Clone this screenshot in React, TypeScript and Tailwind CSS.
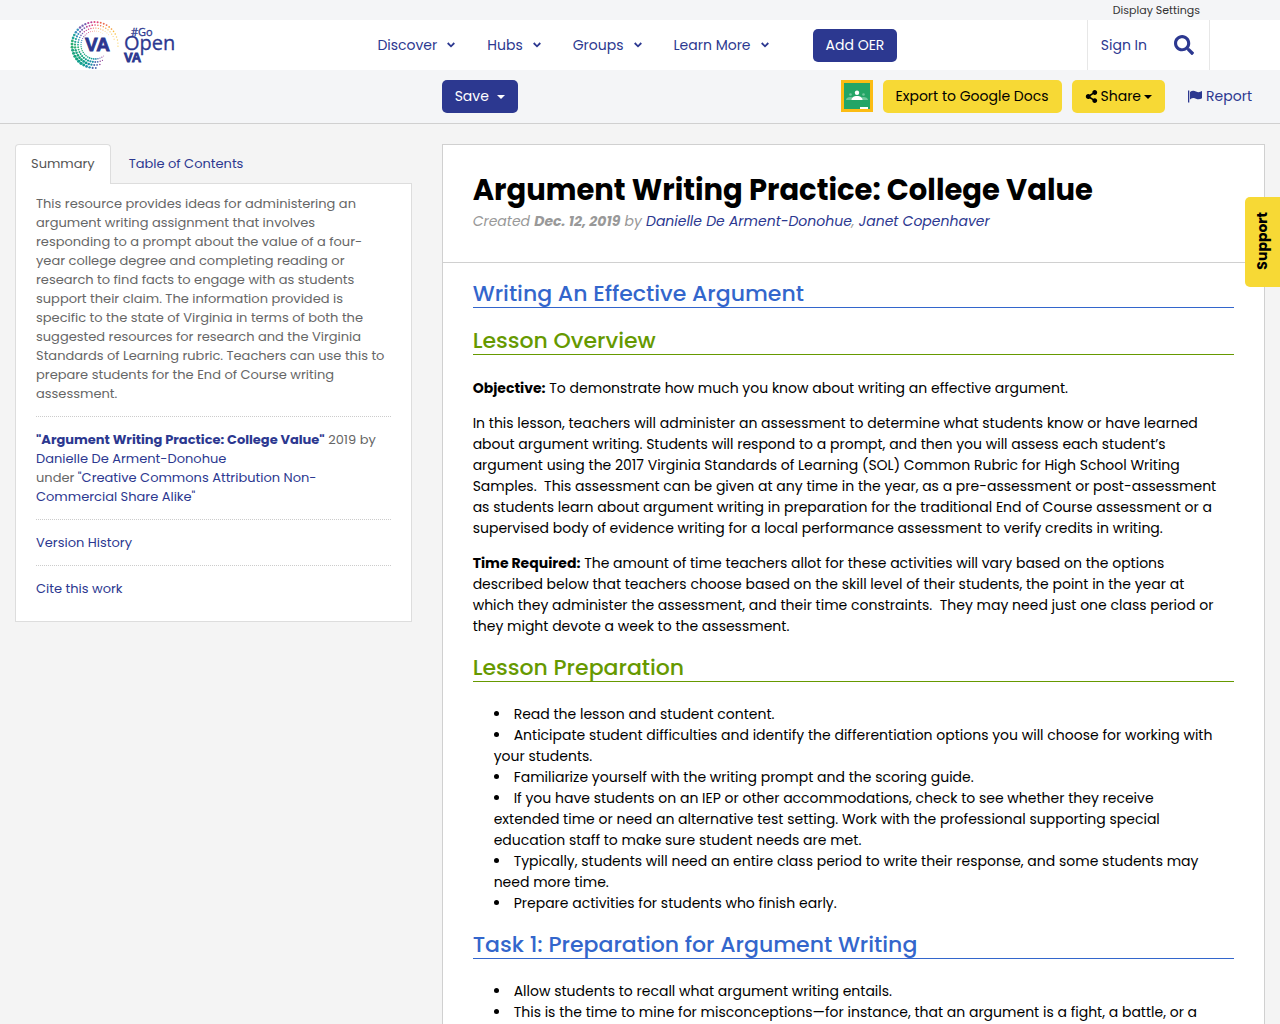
import { useState } from "react";
import { FaSearch, FaShareAlt } from "react-icons/fa";

const navItems = ["Discover", "Hubs", "Groups", "Learn More"];

const preparation = [
  "Read the lesson and student content.",
  "Anticipate student difficulties and identify the differentiation options you will choose for working with your students.",
  "Familiarize yourself with the writing prompt and the scoring guide.",
  "If you have students on an IEP or other accommodations, check to see whether they receive extended time or need an alternative test setting. Work with the professional supporting special education staff to make sure student needs are met.",
  "Typically, students will need an entire class period to write their response, and some students may need more time.",
  "Prepare activities for students who finish early.",
];

const taskOne = [
  "Allow students to recall what argument writing entails.",
  "This is the time to mine for misconceptions—for instance, that an argument is a fight, a battle, or a",
];

// clockwise from the lower right tail, round the left side, to the thin right end
const dotColors = [
  "#8a3f96", "#4a68ac", "#1f8fa8", "#12a08f", "#13a37c", "#22a583",
  "#2fae74", "#22a59a", "#3a90c0", "#7560b0", "#b8449a", "#e0457a",
  "#ec6a4e", "#f39a35", "#f8bd3a", "#f9d36a",
];

function Logo() {
  const dots = [];
  for (let ring = 0; ring < 4; ring++) {
    const count = 36 - ring * 2;
    for (let i = 0; i < count; i++) {
      const t = i / (count - 1);
      const start = 88 - ring * 12;
      const angle = ((start + t * (275 - ring * 8)) * Math.PI) / 180;
      const radius = 23 - ring * 3;
      const grow = t < 0.15 ? 0.9 + t * 5 : 1.65 - (t - 0.15) * 1.2;
      dots.push(
        <circle
          key={`${ring}-${i}`}
          cx={25 + radius * Math.cos(angle)}
          cy={25 + radius * Math.sin(angle)}
          r={Math.max(0.35, grow * (1 - ring * 0.15))}
          fill={dotColors[Math.min(15, Math.floor((t + (3 - ring) * 0.03) * 15))]}
        />
      );
    }
  }
  return (
    <svg
      width="106"
      height="50"
      viewBox="0 0 106 50"
      role="img"
      aria-label="#GoOpenVA"
      fill="#2c3890"
    >
      {dots}
      <g fontFamily="'Liberation Sans', sans-serif" fontWeight="700" stroke="#2c3890" strokeWidth="0.8">
        <text x="15" y="31" fontSize="19">VA</text>
        <text x="54" y="42" fontSize="13">VA</text>
      </g>
      <g fontFamily="'Open Sans', sans-serif" stroke="#2c3890" strokeWidth="0.3">
        <text x="61" y="16" fontSize="11">#Go</text>
        <text x="54" y="30" fontSize="20">Open</text>
      </g>
    </svg>
  );
}

function Chevron() {
  return (
    <svg width="8" height="6" viewBox="0 0 8 6" fill="none" stroke="currentColor" strokeWidth="1.8" aria-hidden="true">
      <path d="M0.7 1 L4 4.3 L7.3 1" />
    </svg>
  );
}

function Caret() {
  return (
    <svg width="8" height="4" viewBox="0 0 8 4" fill="currentColor" aria-hidden="true">
      <path d="M0 0h8L4 4z" />
    </svg>
  );
}

function FlagIcon() {
  return (
    <svg width="14" height="13" viewBox="0 0 14 13" fill="currentColor" aria-hidden="true">
      <path d="M0 0.500h1.300v12H0z" />
      <path d="M2 2c2-1.500 4-1.500 6-0.500s4 0.800 6-0.500v7.200c-2 1.300-4 1.500-6 0.500s-4-0.800-6 0.700z" />
    </svg>
  );
}

function ClassroomIcon() {
  return (
    <svg width="32" height="32" viewBox="0 0 32 32" aria-hidden="true">
      <path fill="#fbbc14" d="M0 0h32v32H0z" />
      <path fill="#23a566" d="M3 3h26v26H3z" />
      <g fill="#6fc69c">
        <circle cx="9.500" cy="14.500" r="1.300" />
        <circle cx="22.500" cy="14.500" r="1.300" />
        <path d="M5 20c0-2 2-3 4.500-3s4 1 4 3zM18.500 20c0-2 2-3 4-3s4.500 1 4.500 3z" />
      </g>
      <circle cx="16" cy="12.800" r="2.200" fill="#fff" />
      <path fill="#fff" d="M10.500 20c0-2.500 2.500-4 5.500-4s5.500 1.500 5.500 4z" />
      <path fill="#fff" d="M19 27h8v2h-8z" />
    </svg>
  );
}

function Heading({ color, children }: { color: string; children: string }) {
  return (
    <h2 className={`mt-5 mb-[22px] border-b pb-[2px] text-[22px] leading-[22px] font-medium ${color}`}>
      {children}
    </h2>
  );
}

function BulletList({ items }: { items: string[] }) {
  return (
    <ul className="mt-[22px] list-inside list-disc pr-[14px] pl-[21px]">
      {items.map((item) => (
        <li key={item}>{item}</li>
      ))}
    </ul>
  );
}

export default function App() {
  const [tab, setTab] = useState<"summary" | "contents">("summary");

  const tabClass = (active: boolean) =>
    active
      ? "-mb-px h-10 rounded-t border border-b-0 border-[#ddd] bg-white px-[15px] pb-[3px] text-[#555]"
      : "h-[39px] px-[15px] text-[#2c3890]";

  return (
    <div className="min-h-screen bg-[#f4f4f4] font-[Poppins,Inter,sans-serif] text-sm leading-[21px] text-black">
      <div className="bg-[#f4f5f7]">
        <div className="mx-auto flex h-5 max-w-[1140px] items-center justify-end px-[10px]">
          <a href="#settings" className="text-[11px] text-[#333]">
            Display Settings
          </a>
        </div>
      </div>

      <header className="bg-white">
        <div className="mx-auto flex h-[50px] max-w-[1140px] items-center justify-between">
          <a href="#home">
            <Logo />
          </a>
          <nav className="ml-3 flex items-center text-[#2c3890]">
            {navItems.map((item) => (
              <button key={item} className="mr-8 flex items-center gap-[10px]">
                {item}
                <Chevron />
              </button>
            ))}
            <a href="#add" className="ml-3 rounded-[5px] bg-[#2c3890] px-[13px] py-[6px] text-white">
              Add OER
            </a>
          </nav>
          <div className="flex h-full items-center gap-[27px] border-x border-[#e7e7e7] pr-[15px] pl-[13px] text-[#2c3890]">
            <a href="#signin">Sign In</a>
            <button aria-label="Search">
              <FaSearch size={20} />
            </button>
          </div>
        </div>
      </header>

      <div className="flex border-b border-[#d0d0d0] bg-[#f4f5f7]">
        <div className="w-1/3" />
        <div className="flex w-2/3 items-center justify-between px-[15px] py-[10px]">
          <button className="flex items-center gap-2 rounded-[5px] bg-[#2c3890] px-[13px] py-[6px] text-white">
            Save
            <Caret />
          </button>
          <div className="flex items-start gap-[10px]">
            <button aria-label="Share to Google Classroom">
              <ClassroomIcon />
            </button>
            <button className="rounded-[5px] bg-[#f7d935] px-[13px] py-[6px]">
              Export to Google Docs
            </button>
            <button className="flex items-center gap-[3px] rounded-[5px] bg-[#f7d935] px-[13px] py-[6px]">
              <FaShareAlt size={13} />
              Share
              <Caret />
            </button>
            <button className="flex items-center gap-1 px-[13px] py-[6px] text-[#2c3890]">
              <FlagIcon />
              Report
            </button>
          </div>
        </div>
      </div>

      <div className="flex items-start pt-5">
        <aside className="w-1/3 px-[15px] text-[13px] leading-[19px] text-[#666]">
          <div role="tablist" className="flex gap-[3px]">
            <button
              role="tab"
              aria-selected={tab === "summary"}
              onClick={() => setTab("summary")}
              className={tabClass(tab === "summary")}
            >
              Summary
            </button>
            <button
              role="tab"
              aria-selected={tab === "contents"}
              onClick={() => setTab("contents")}
              className={tabClass(tab === "contents")}
            >
              Table of Contents
            </button>
          </div>
          <div className="border border-[#ddd] bg-white px-5 pt-[10px] pb-[10px]">
            {tab === "summary" ? (
              <div className="divide-y divide-dotted divide-[#ccc]">
                <p className="pb-[13px]">
                  This resource provides ideas for administering an argument writing assignment that
                  involves responding to a prompt about the value of a four-year college degree and
                  completing reading or research to find facts to engage with as students support
                  their claim. The information provided is specific to the state of Virginia in terms
                  of both the suggested resources for research and the Virginia Standards of Learning
                  rubric. Teachers can use this to prepare students for the End of Course writing
                  assessment.
                </p>
                <div className="py-[13px]">
                  <a href="#resource" className="font-bold text-[#2c3890]">
                    "Argument Writing Practice: College Value"
                  </a>{" "}
                  2019 by{" "}
                  <a href="#author" className="text-[#2c3890]">
                    Danielle De Arment-Donohue
                  </a>
                  <br />
                  under{" "}
                  <a href="#license" className="text-[#2c3890]">
                    "Creative Commons Attribution Non-Commercial Share Alike"
                  </a>
                </div>
                <div className="py-[13px]">
                  <a href="#versions" className="text-[#2c3890]">
                    Version History
                  </a>
                </div>
                <div className="py-[13px]">
                  <a href="#cite" className="text-[#2c3890]">
                    Cite this work
                  </a>
                </div>
              </div>
            ) : (
              <a href="#overview" className="text-[#2c3890]">
                Lesson Overview
              </a>
            )}
          </div>
        </aside>

        <main className="w-2/3 px-[15px]">
          <div className="border border-[#d0d0d0] bg-white">
            <div className="border-b border-[#d0d0d0] px-[30px] pt-[29px] pb-[30px]">
              <h1 className="text-[29px] leading-8 font-bold">
                Argument Writing Practice: College Value
              </h1>
              <p className="pt-[5px] text-[#999] italic">
                Created <b>Dec. 12, 2019</b> by{" "}
                <a href="#author" className="text-[#2c3890]">
                  Danielle De Arment-Donohue
                </a>
                ,{" "}
                <a href="#coauthor" className="text-[#2c3890]">
                  Janet Copenhaver
                </a>
              </p>
            </div>
            <article className="flow-root px-[30px] pb-[30px]">
              <Heading color="text-[#3366cc]">Writing An Effective Argument</Heading>
              <Heading color="text-[#669900]">Lesson Overview</Heading>
              <div className="mt-[23px] space-y-[14px] pr-[14px]">
                <p>
                  <b>Objective:</b> To demonstrate how much you know about writing an effective
                  argument.
                </p>
                <p>
                  In this lesson, teachers will administer an assessment to determine what students
                  know or have learned about argument writing. Students will respond to a prompt,
                  and then you will assess each student’s argument using the 2017 Virginia Standards
                  of Learning (SOL) Common Rubric for High School Writing Samples.&nbsp; This
                  assessment can be given at any time in the year, as a pre-assessment or
                  post-assessment as students learn about argument writing in preparation for the
                  traditional End of Course assessment or a supervised body of evidence writing for
                  a local performance assessment to verify credits in writing.
                </p>
                <p>
                  <b>Time Required:</b> The amount of time teachers allot for these activities will
                  vary based on the options described below that teachers choose based on the skill
                  level of their students, the point in the year at which they administer the
                  assessment, and their time constraints.&nbsp; They may need just one class period
                  or they might devote a week to the assessment.
                </p>
              </div>
              <Heading color="text-[#669900]">Lesson Preparation</Heading>
              <BulletList items={preparation} />
              <Heading color="text-[#3366cc]">Task 1: Preparation for Argument Writing</Heading>
              <BulletList items={taskOne} />
            </article>
          </div>
        </main>
      </div>

      <button className="fixed top-[197px] right-0 h-[90px] w-[35px] rounded-l-[5px] bg-[#f7d935] pt-1 font-bold">
        <span className="inline-block rotate-180 [writing-mode:vertical-rl]">Support</span>
      </button>
    </div>
  );
}
